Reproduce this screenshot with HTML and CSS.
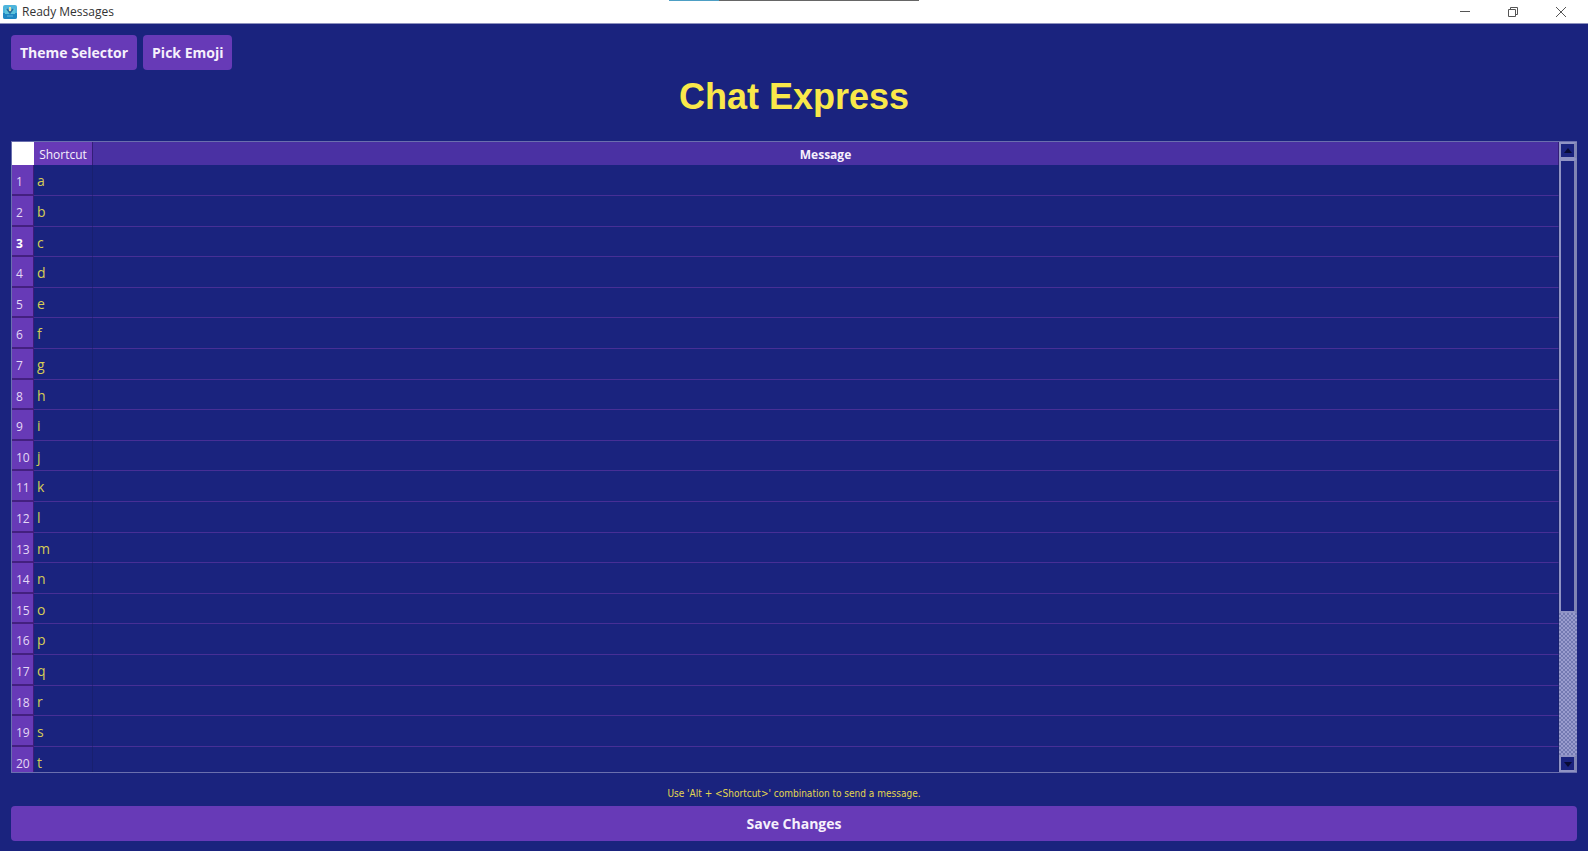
FILE: index.html
```html
<!DOCTYPE html>
<html lang="en">
  <head>
    <meta charset="UTF-8">
    <title>Ready Messages</title>
    <link rel="stylesheet" href="styles.css">
  </head>
  <body>
    <div class="top-strip"></div>

    <header class="title-bar">
      <svg class="app-icon" width="14" height="14" viewBox="0 0 14 14">
        <rect width="14" height="14" rx="2" fill="#4db4dc"/>
        <path d="M0 8h14v4a2 2 0 0 1-2 2H2a2 2 0 0 1-2-2z" fill="#1f86c2"/>
        <path d="M2 3l4 4h2l4-4v6H2z" fill="#5cc3dc"/>
        <path d="M4 4l3 4 3-4" fill="none" stroke="#2b6f9e" stroke-width="1.5"/>
        <path d="M7 2v4" stroke="#e6dfae" stroke-width="2"/>
        <path d="M4 11h6" stroke="#5fb4dc"/>
      </svg>
      <span class="window-title">Ready Messages</span>
      <div class="window-buttons">
        <button class="window-button" aria-label="Minimize">
          <svg width="12" height="12" viewBox="0 0 12 12"><path d="M1 5.5h10"/></svg>
        </button>
        <button class="window-button" aria-label="Restore">
          <svg width="12" height="12" viewBox="0 0 12 12"><path d="M1.5 3.5h7v7h-7zM3.5 3.5v-2h7v7h-2"/></svg>
        </button>
        <button class="window-button" aria-label="Close">
          <svg width="12" height="12" viewBox="0 0 12 12"><path d="M1 1l10 10M11 1L1 11"/></svg>
        </button>
      </div>
    </header>

    <main class="content">
      <div class="toolbar">
        <button class="btn">Theme Selector</button>
        <button class="btn">Pick Emoji</button>
      </div>

      <h1>Chat Express</h1>

      <div class="table-frame">
        <div class="table-view">
          <table>
            <thead>
              <tr>
                <td class="corner"></td>
                <th class="shortcut-head" scope="col">Shortcut</th>
                <th class="message-head" scope="col">Message</th>
              </tr>
            </thead>
            <tbody>
              <tr><th scope="row">1</th><td>a</td><td></td></tr>
              <tr><th scope="row">2</th><td>b</td><td></td></tr>
              <tr class="current"><th scope="row">3</th><td>c</td><td></td></tr>
              <tr><th scope="row">4</th><td>d</td><td></td></tr>
              <tr><th scope="row">5</th><td>e</td><td></td></tr>
              <tr><th scope="row">6</th><td>f</td><td></td></tr>
              <tr><th scope="row">7</th><td>g</td><td></td></tr>
              <tr><th scope="row">8</th><td>h</td><td></td></tr>
              <tr><th scope="row">9</th><td>i</td><td></td></tr>
              <tr><th scope="row">10</th><td>j</td><td></td></tr>
              <tr><th scope="row">11</th><td>k</td><td></td></tr>
              <tr><th scope="row">12</th><td>l</td><td></td></tr>
              <tr><th scope="row">13</th><td>m</td><td></td></tr>
              <tr><th scope="row">14</th><td>n</td><td></td></tr>
              <tr><th scope="row">15</th><td>o</td><td></td></tr>
              <tr><th scope="row">16</th><td>p</td><td></td></tr>
              <tr><th scope="row">17</th><td>q</td><td></td></tr>
              <tr><th scope="row">18</th><td>r</td><td></td></tr>
              <tr><th scope="row">19</th><td>s</td><td></td></tr>
              <tr><th scope="row">20</th><td>t</td><td></td></tr>
            </tbody>
          </table>
        </div>

        <div class="scrollbar">
          <button class="scroll-button" aria-label="Scroll up">
            <svg width="8" height="6" viewBox="0 0 8 6"><path d="M4 0l4 5H0z"/></svg>
          </button>
          <div class="scroll-thumb"></div>
          <div class="scroll-track"></div>
          <button class="scroll-button" aria-label="Scroll down">
            <svg width="8" height="6" viewBox="0 0 8 6"><path d="M0 1h8L4 6z"/></svg>
          </button>
        </div>
      </div>

      <p class="hint">Use 'Alt + &lt;Shortcut&gt;' combination to send a message.</p>
      <button class="btn save">Save Changes</button>
    </main>
  </body>
</html>
```

FILE: styles.css
```css
* {
  box-sizing: border-box;
  margin: 0;
  padding: 0;
}

body {
  display: flex;
  flex-direction: column;
  height: 100vh;
  overflow: hidden;
  font-family: "Open Sans", "Noto Sans", sans-serif;
  background-color: #1a237e;
  color: #f9e84a;
}

/* Window frame */
.top-strip {
  position: absolute;
  top: 0;
  left: 50%;
  width: 250px;
  height: 1px;
  margin-left: -125px;
  background: linear-gradient(to right, #4d9fc4 20%, #666 20%);
}

.title-bar {
  display: flex;
  align-items: center;
  flex: none;
  height: 24px;
  padding: 0 3px;
  background-color: #fff;
  border-bottom: 1px solid #8d91be;
}

.window-title {
  flex: 1;
  padding-left: 5px;
  font-size: 12px;
  line-height: 16px;
  color: #333;
}

.window-buttons {
  display: flex;
}

.window-button {
  display: flex;
  align-items: center;
  justify-content: center;
  width: 48px;
  height: 23px;
  border: none;
  background: none;
}

.window-button svg {
  fill: none;
  stroke: #555;
}

/* Page */
.content {
  display: flex;
  flex-direction: column;
  flex: 1;
  min-height: 0;
  padding: 11px 11px 10px;
}

.toolbar {
  display: flex;
  gap: 6px;
}

.btn {
  height: 35px;
  padding: 0 9px;
  border: none;
  border-radius: 4px;
  background-color: #673ab7;
  color: #f6f0fc;
  font-family: inherit;
  font-size: 14px;
  font-weight: bold;
}

h1 {
  padding: 6px 0 23px;
  text-align: center;
  font-family: "Liberation Sans", Arial, sans-serif;
  font-size: 36px;
  line-height: 42px;
}

/* Message table */
.table-frame {
  display: flex;
  flex: 1;
  min-height: 0;
  border: 1px solid #6a6fae;
  border-right: none;
}

.table-view {
  flex: 1;
  overflow: hidden;
}

table {
  width: 100%;
  table-layout: fixed;
  border-collapse: separate;
  border-spacing: 0;
}

thead tr {
  height: 23px;
}

thead th {
  padding-top: 2px;
  border-right: 1px solid #331e78;
  font-size: 12px;
  line-height: 16px;
  color: #f6f0fc;
}

.corner {
  width: 22px;
  background-color: #fff;
}

.shortcut-head {
  width: 59px;
  background-color: #673ab7;
  font-weight: normal;
}

.message-head {
  background-color: #4a31a3;
}

tbody tr {
  height: 31px;
}

tbody tr:nth-child(5n + 3),
tbody tr:nth-child(5n) {
  height: 30px;
}

tbody th {
  padding: 5px 0 0 4px;
  border-right: 1px solid #3e1b78;
  border-bottom: 2px solid #43207f;
  background-color: #673ab7;
  color: #e4d9f6;
  font-size: 12px;
  font-weight: normal;
  line-height: 16px;
  text-align: left;
}

tbody td {
  padding: 2px 0 0 3px;
  border-right: 1px solid #18206f;
  border-bottom: 1px solid #472f96;
  color: #d5cc55;
  font-size: 14px;
  line-height: 18px;
}

.current th {
  color: #fff;
  font-weight: bold;
}

/* Scrollbar */
.scrollbar {
  display: flex;
  flex-direction: column;
  width: 18px;
}

.scroll-button,
.scroll-thumb {
  border: 2px solid #8f93c4;
  border-right: 3px solid #7f84b4;
  background-color: #1a237e;
}

.scroll-button {
  display: flex;
  align-items: center;
  justify-content: center;
  flex: none;
  height: 17px;
}

.scroll-button svg {
  fill: #080b35;
}

.scroll-thumb {
  flex: 76;
}

.scroll-track {
  flex: 24;
  background: repeating-conic-gradient(#9a9dce 0 25%, #737ab2 0 50%) 0 0 / 4px 4px;
}

.hint {
  padding: 13px 0 4px;
  text-align: center;
  font-family: "DejaVu Sans Condensed", "DejaVu Sans", sans-serif;
  font-size: 10px;
  line-height: 16px;
  color: #e3d650;
}
```
